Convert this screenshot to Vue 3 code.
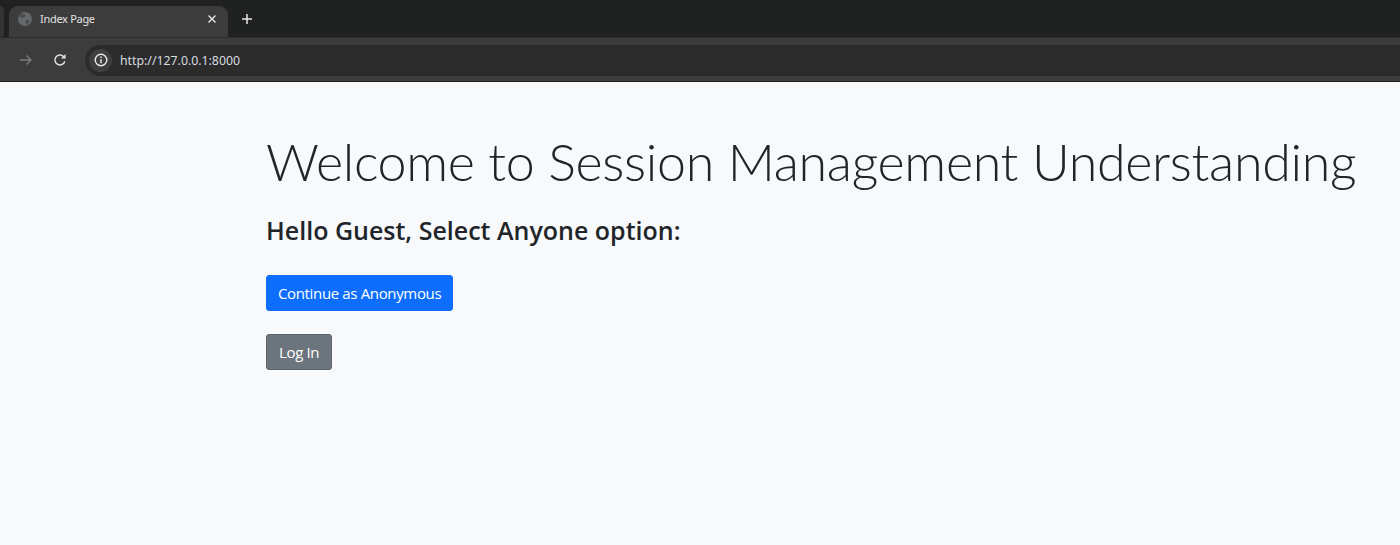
<template>
  <div class="browser">
    <div class="tabstrip">
      <div class="prev-tab"></div>
      <div class="tab">
        <svg class="globe" width="14" height="14" viewBox="0 0 14 14">
          <circle cx="7" cy="7" r="7" fill="#65696d" />
          <path d="M3 1.5 6.5 2 7.5 4 5.5 6 3 5.5 1 4ZM8 8l3.5.5L11 11l-2.5 2L7.500 10.500Z" fill="#4a4c4e" />
        </svg>
        <span class="tab-title">Index Page</span>
        <svg class="tab-close" width="10" height="10" viewBox="0 0 10 10">
          <path d="M1.500 1.500l7 7M8.500 1.500l-7 7" stroke="#e8e8e8" stroke-width="1.400" fill="none" />
        </svg>
      </div>
      <svg class="new-tab" width="12" height="12" viewBox="0 0 12 12">
        <path d="M6 1v10M1 6h10" stroke="#e8e8e8" stroke-width="1.500" fill="none" />
      </svg>
    </div>
    <div class="toolbar">
      <svg class="nav-icon forward" width="14" height="14" viewBox="0 0 14 14">
        <path d="M1 7h11M7.500 2.500 12 7l-4.500 4.500" stroke="#7b7b7b" stroke-width="1.400" fill="none" />
      </svg>
      <svg class="nav-icon reload" width="14" height="14" viewBox="0 0 14 14">
        <path d="M11.800 8.200A5 5 0 1 1 10.500 3.400L12 5" stroke="#e3e3e3" stroke-width="1.400" fill="none" />
        <path d="M12.500 1v4.500H8z" fill="#e3e3e3" />
      </svg>
      <div class="omnibox">
        <span class="info-chip">
          <svg width="14" height="14" viewBox="0 0 14 14">
            <circle cx="7" cy="7" r="5.800" stroke="#e8e8e8" stroke-width="1.400" fill="none" />
            <path d="M7 6.200v4M7 3.600v1.500" stroke="#e8e8e8" stroke-width="1.500" />
          </svg>
        </span>
        <span class="url">http://127.0.0.1:8000</span>
      </div>
    </div>
    <div class="toolbar-edge"></div>
  </div>

  <main class="page">
    <h1>Welcome to Session Management Understanding</h1>
    <h2>Hello Guest, Select Anyone option:</h2>
    <button class="btn primary">Continue as Anonymous</button>
    <button class="btn secondary">Log In</button>
  </main>
</template>

<script setup>
</script>

<style>
html, body {
  margin: 0;
  background: #f8f9fa;
  overflow: hidden;
}
</style>

<style scoped>
.browser {
  font-family: "Noto Sans", "Open Sans", sans-serif;
}
.tabstrip {
  height: 37px;
  background: #202221;
  display: flex;
  align-items: flex-end;
}
.prev-tab {
  width: 4px;
  height: 31px;
  margin-right: 5px;
  background: #333;
  border-radius: 0 8px 8px 0;
}
.tab {
  width: 219px;
  height: 31px;
  background: #3c3c3c;
  border-radius: 9px 9px 0 0;
  display: flex;
  align-items: center;
  padding: 0 11px 6px 9px;
  box-sizing: border-box;
}
.globe {
  flex: none;
}
.tab-title {
  margin-left: 8px;
  font-size: 11px;
  letter-spacing: -0.3px;
  color: #e3e3e3;
  flex: 1;
}
.tab-close {
  flex: none;
}
.new-tab {
  margin-left: 13px;
  margin-bottom: 12px;
}
.toolbar {
  height: 38px;
  box-sizing: border-box;
  padding-top: 7px;
  background: #3c3c3c;
  border-top: 1px solid #2c2c2c;
  display: flex;
  align-items: center;
}
.nav-icon {
  flex: none;
}
.forward {
  margin-left: 19px;
}
.reload {
  margin-left: 20px;
}
.omnibox {
  margin-left: 18px;
  flex: 1;
  height: 31px;
  background: #2b2b2b;
  border-radius: 16px 0 0 16px;
  display: flex;
  align-items: center;
  padding-left: 4px;
}
.info-chip {
  width: 23px;
  height: 23px;
  border-radius: 50%;
  background: #3f3f3f;
  display: flex;
  align-items: center;
  justify-content: center;
}
.url {
  margin-left: 8px;
  font-size: 12.300px;
  color: #d8dde0;
}
.toolbar-edge {
  height: 7px;
  background: #3c3c3c;
  border-bottom: 1px solid #202020;
  box-sizing: border-box;
}
.page {
  padding: 43px 0 0 266px;
  display: flex;
  flex-direction: column;
  align-items: flex-start;
  font-family: "Open Sans", "Noto Sans", sans-serif;
  color: #212529;
}
h1 {
  margin: 0;
  font-family: Lato, Roboto, sans-serif;
  font-size: 52px;
  font-weight: 300;
  letter-spacing: -0.33px;
  line-height: 72px;
  white-space: nowrap;
}
h2 {
  margin: 17px 0 0;
  font-size: 25px;
  font-weight: 600;
  line-height: 32px;
  white-space: nowrap;
}
.btn {
  height: 36px;
  padding: 0 11px;
  border: 1px solid;
  border-radius: 3px;
  font: inherit;
  font-size: 15px;
  letter-spacing: -0.35px;
  color: #fff;
}
.primary {
  margin-top: 29px;
  background: #0d6efd;
  border-color: #0d6efd;
}
.secondary {
  margin-top: 23px;
  padding: 0 12px;
  background: #6c757d;
  border-color: #5c636a;
}
</style>
